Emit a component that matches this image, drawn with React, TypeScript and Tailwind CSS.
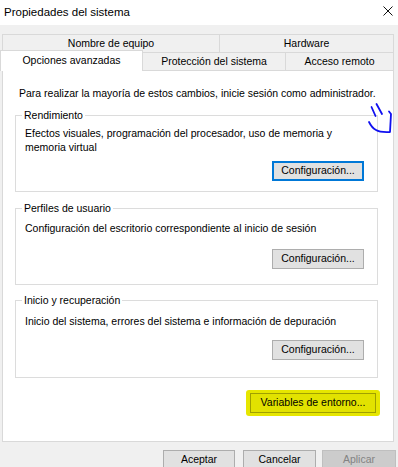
import React from "react"

function Btn({
  label,
  className = "",
  focused = false,
  disabled = false,
}: {
  label: string
  className?: string
  focused?: boolean
  disabled?: boolean
}) {
  const look = disabled
    ? "border border-[#bfbfbf] bg-[#cccccc] text-[#838383]"
    : focused
      ? "border-2 border-[#0078d7] bg-[#e1e1e1]"
      : "border border-[#adadad] bg-[#e1e1e1]"
  return <div className={`flex h-[20px] items-center justify-center ${look} ${className}`}>{label}</div>
}

function Group({
  title,
  className = "",
  children,
}: {
  title: string
  className?: string
  children: React.ReactNode
}) {
  return (
    <div className={`relative ml-[12px] w-[363px] border border-[#dcdcdc] ${className}`}>
      <span className="absolute -top-[8px] left-[6px] bg-white px-[2px] leading-[15px]">{title}</span>
      {children}
    </div>
  )
}

export default function App() {
  return (
    <div className="h-[467px] w-[398px] overflow-hidden bg-[#f0f0f0] font-['Liberation_Sans',Arial,sans-serif] text-[10.5px] text-black">
      {/* title bar */}
      <div className="flex h-[25px] items-center justify-between bg-white pl-[4px] pr-[5px]">
        <span className="text-[11.5px]">Propiedades del sistema</span>
        <svg width="10" height="10" viewBox="0 0 10 10" className="mb-[3px]">
          <path d="M0.5 0.5 L9.5 9.5 M9.5 0.5 L0.5 9.5" stroke="#111" strokeWidth="1" />
        </svg>
      </div>

      {/* tabs */}
      <div className="mt-[9px] ml-[2px] flex h-[18px] w-[392px]">
        <div className="flex w-[218px] justify-center border-l border-t border-r border-[#d9d9d9] pt-[1px] leading-[14px]">
          Nombre de equipo
        </div>
        <div className="flex flex-1 justify-center border-t border-r border-[#d9d9d9] pt-[1px] leading-[14px]">
          Hardware
        </div>
      </div>
      <div className="flex h-[18px] w-[394px] items-end">
        <div className="relative top-[1px] z-10 flex h-[21px] w-[143px] justify-center border-l border-t border-r border-[#d9d9d9] bg-white pt-[2px] leading-[14px]">
          Opciones avanzadas
        </div>
        <div className="flex h-[18px] w-[143px] items-center justify-center border-t border-r border-[#d9d9d9]">
          Protección del sistema
        </div>
        <div className="flex h-[18px] flex-1 items-center justify-center border-t border-r border-[#d9d9d9]">
          Acceso remoto
        </div>
      </div>

      {/* panel */}
      <div className="relative ml-[2px] h-[372px] w-[392px] border border-[#d9d9d9] bg-white">
        <p className="mt-[15px] pl-[16px] leading-[15px]">
          Para realizar la mayoría de estos cambios, inicie sesión como administrador.
        </p>

        <Group title="Rendimiento" className="mt-[14px] h-[77px]">
          <p className="ml-[9px] mt-[10px] leading-[14px]">
            Efectos visuales, programación del procesador, uso de memoria y
            <br />
            memoria virtual
          </p>
          <div className="mt-[7px] flex justify-end pr-[13px]">
            <Btn label="Configuración..." focused className="w-[92px]" />
          </div>
        </Group>

        <Group title="Perfiles de usuario" className="mt-[16px] h-[77px]">
          <p className="ml-[9px] mt-[12px] leading-[14px]">
            Configuración del escritorio correspondiente al inicio de sesión
          </p>
          <div className="mt-[14px] flex justify-end pr-[13px]">
            <Btn label="Configuración..." className="w-[92px]" />
          </div>
        </Group>

        <Group title="Inicio y recuperación" className="mt-[15px] h-[78px]">
          <p className="ml-[9px] mt-[13px] leading-[14px]">
            Inicio del sistema, errores del sistema e información de depuración
          </p>
          <div className="mt-[12px] flex justify-end pr-[13px]">
            <Btn label="Configuración..." className="w-[92px]" />
          </div>
        </Group>

        <div className="mt-[12px] flex justify-end pr-[13px]">
          <div className="rounded-[3px] bg-[#e6e600] px-[4px] py-[3px]">
            <div className="flex h-[20px] w-[126px] items-center justify-center border border-[#a0a000] bg-[#e2e200]">
              Variables de entorno...
            </div>
          </div>
        </div>

        {/* hand scribble */}
        <svg
          className="absolute left-[361px] top-[31px]"
          width="32"
          height="34"
          viewBox="0 0 32 34"
          fill="none"
          stroke="#1010f0"
          strokeWidth="1.8"
          strokeLinecap="round"
          strokeLinejoin="round"
        >
          <path d="M7.5 5 L11.5 14" />
          <path d="M12.5 2 L18 12" />
          <path d="M5 20 Q8 26 12 28 Q16 30.5 26 30 L27 12 L25 9.5" />
        </svg>
      </div>

      {/* bottom buttons */}
      <div className="mt-[8px] flex">
        <Btn label="Aceptar" className="ml-[163px] w-[72px]" />
        <Btn label="Cancelar" className="ml-[8px] w-[73px]" />
        <Btn label="Aplicar" disabled className="ml-[6px] w-[74px]" />
      </div>
    </div>
  )
}
